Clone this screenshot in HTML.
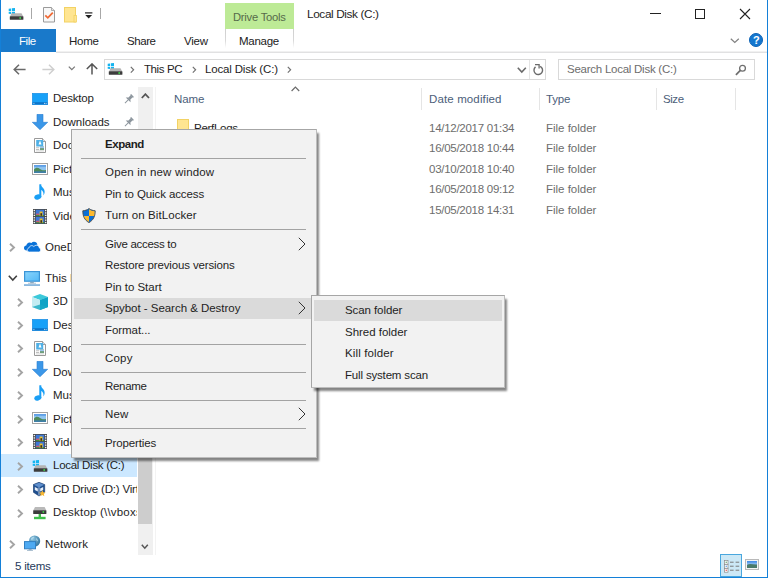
<!DOCTYPE html>
<html>
<head>
<meta charset="utf-8">
<title>Local Disk (C:)</title>
<style>
*{box-sizing:border-box;margin:0;padding:0}
html,body{width:768px;height:578px;overflow:hidden;background:#fff}
body{font-family:"Liberation Sans",sans-serif;font-size:11.5px;color:#1e1e1e;position:relative}
.a{position:absolute}
.t{position:absolute;white-space:nowrap;line-height:14px;height:14px;transform-origin:0 50%}
#win{position:absolute;left:0;top:0;width:768px;height:578px;border-left:1px solid #1480d8;border-right:1px solid #1480d8;border-bottom:1px solid #1480d8;background:#fff}
.sep{position:absolute;height:1px;background:#a3a3a3;left:81px;width:225px}
.mi{position:absolute;left:105px}
</style>
</head>
<body>
<div id="win"></div>

<!-- title bar -->
<div class="a" style="left:225px;top:3px;width:69px;height:26px;background:#bdea96"></div>
<div class="t" style="left:233px;top:10px;color:#566a4a;font-size:11.2px;letter-spacing:-0.23px">Drive Tools</div>
<div class="t" style="left:307px;top:7px;font-size:11.8px;letter-spacing:-0.38px">Local Disk (C:)</div>

<!-- ribbon tabs -->
<div class="a" style="left:1px;top:29px;width:55px;height:23px;background:#1979ca"></div>
<div class="t" style="left:19px;top:34px;color:#fff;letter-spacing:-0.45px">File</div>
<div class="t" style="left:69px;top:34px;color:#222;letter-spacing:-0.23px">Home</div>
<div class="t" style="left:127px;top:34px;color:#222;letter-spacing:-0.42px">Share</div>
<div class="t" style="left:184px;top:34px;color:#222;letter-spacing:-0.24px">View</div>
<div class="a" style="left:225px;top:29px;width:1px;height:19px;background:linear-gradient(#cfcfcf,#d8d8d8 60%,#fff)"></div><div class="a" style="left:293px;top:29px;width:1px;height:19px;background:linear-gradient(#cfcfcf,#d8d8d8 60%,#fff)"></div>
<div class="t" style="left:239px;top:34px;color:#222;letter-spacing:-0.27px">Manage</div>
<div class="a" style="left:56px;top:51px;width:711px;height:2px;background:linear-gradient(#f1f1f1 50%,#e1e1e2 50%)"></div>

<!-- address bar -->
<div class="a" style="left:104px;top:59px;width:442px;height:21px;border:1px solid #d9d9d9"></div>
<div class="a" style="left:529px;top:60px;width:1px;height:19px;background:#e5e5e5"></div>
<div class="t" style="left:144px;top:62px;letter-spacing:-0.4px">This PC</div>
<div class="t" style="left:205px;top:62px;letter-spacing:-0.17px">Local Disk (C:)</div>
<div class="a" style="left:558px;top:59px;width:197px;height:21px;border:1px solid #d9d9d9"></div>
<div class="t" style="left:567px;top:62px;color:#6d6d6d;letter-spacing:-0.25px">Search Local Disk (C:)</div>

<!-- nav pane -->
<div class="a" style="left:1px;top:454px;width:136px;height:23px;background:#cce8ff"></div>
<div class="a" style="left:138px;top:87px;width:15px;height:468px;background:#f0f0f0"></div>
<div class="a" style="left:138px;top:300px;width:14px;height:224px;background:#cdcdcd"></div>
<div class="a" style="left:0;top:84px;width:137px;height:471px;overflow:hidden"><div class="a" style="left:0;top:-84px">
<div class="t" style="left:53px;top:91px;letter-spacing:-0.21px">Desktop</div>
<div class="t" style="left:53px;top:115px;letter-spacing:-0.05px">Downloads</div>
<div class="t" style="left:53px;top:138px">Documents</div>
<div class="t" style="left:53px;top:162px">Pictures</div>
<div class="t" style="left:53px;top:185px">Music</div>
<div class="t" style="left:53px;top:209px">Videos</div>
<div class="t" style="left:45px;top:240px">OneDrive</div>
<div class="t" style="left:45px;top:271px">This PC</div>
<div class="t" style="left:53px;top:294px">3D Objects</div>
<div class="t" style="left:53px;top:318px">Desktop</div>
<div class="t" style="left:53px;top:341px">Documents</div>
<div class="t" style="left:53px;top:365px">Downloads</div>
<div class="t" style="left:53px;top:388px">Music</div>
<div class="t" style="left:53px;top:412px">Pictures</div>
<div class="t" style="left:53px;top:435px">Videos</div>
<div class="t" style="left:53px;top:458px;letter-spacing:-0.27px">Local Disk (C:)</div>
<div class="t" style="left:53px;top:482px;letter-spacing:-0.2px">CD Drive (D:) VirtualBox Guest</div>
<div class="t" style="left:53px;top:505px;letter-spacing:0.2px">Desktop (\\vboxsvr) (E:)</div>
<div class="t" style="left:45px;top:537px;letter-spacing:0.14px">Network</div>
</div></div>

<div class="a" style="left:155px;top:87px;width:1px;height:468px;background:#f3f3f3"></div>
<!-- column headers -->
<div class="t" style="left:174px;top:92px;color:#4c607a;letter-spacing:-0.11px">Name</div>
<div class="t" style="left:429px;top:92px;color:#4c607a;letter-spacing:0.13px">Date modified</div>
<div class="t" style="left:546px;top:92px;color:#4c607a;letter-spacing:-0.21px">Type</div>
<div class="t" style="left:663px;top:92px;color:#4c607a;letter-spacing:-0.45px">Size</div>
<div class="a" style="left:421px;top:88px;width:1px;height:22px;background:#e5e5e5"></div>
<div class="a" style="left:539px;top:88px;width:1px;height:22px;background:#e5e5e5"></div>
<div class="a" style="left:656px;top:88px;width:1px;height:22px;background:#e5e5e5"></div>
<div class="a" style="left:735px;top:88px;width:1px;height:22px;background:#e5e5e5"></div>

<!-- rows -->
<div class="t" style="left:194px;top:121px;letter-spacing:-0.28px">PerfLogs</div>
<div class="t" style="left:429px;top:121px;color:#6d6d6d;letter-spacing:-0.27px">14/12/2017 01:34</div>
<div class="t" style="left:429px;top:141px;color:#6d6d6d;letter-spacing:-0.27px">16/05/2018 10:44</div>
<div class="t" style="left:429px;top:162px;color:#6d6d6d;letter-spacing:-0.27px">03/10/2018 10:40</div>
<div class="t" style="left:429px;top:182px;color:#6d6d6d;letter-spacing:-0.27px">16/05/2018 09:12</div>
<div class="t" style="left:429px;top:203px;color:#6d6d6d;letter-spacing:-0.27px">15/05/2018 14:31</div>
<div class="t" style="left:546px;top:121px;color:#6d6d6d;letter-spacing:-0.01px">File folder</div>
<div class="t" style="left:546px;top:141px;color:#6d6d6d;letter-spacing:-0.01px">File folder</div>
<div class="t" style="left:546px;top:162px;color:#6d6d6d;letter-spacing:-0.01px">File folder</div>
<div class="t" style="left:546px;top:182px;color:#6d6d6d;letter-spacing:-0.01px">File folder</div>
<div class="t" style="left:546px;top:203px;color:#6d6d6d;letter-spacing:-0.01px">File folder</div>

<!-- status bar -->
<div class="t" style="left:15px;top:559px;color:#1e395b;letter-spacing:-0.2px">5 items</div>
<div class="a" style="left:720px;top:554px;width:22px;height:23px;background:#cce8f6;border:1px solid #49a7de"></div>

<!-- icons -->
<svg class="a" style="left:8px;top:8px" width="16" height="12" viewBox="0 0 16 12"><path d="M0.7 0.7L3 0.4V3H0.7z" fill="#14b4f0"/><path d="M3.8 0.3L7 0V3H3.8z" fill="#14b4f0"/><path d="M0.7 3.7H3V6.1L0.7 5.8z" fill="#14b4f0"/><path d="M3.8 3.7H7V6.4L3.8 6.1z" fill="#14b4f0"/><path d="M3.5 5.2h10l1.8 3.2h-13.3z" fill="#b4b4b4"/><rect x="1.8" y="8.2" width="13.6" height="3.6" rx="0.6" fill="#3c3c3c"/><rect x="11.4" y="9.2" width="1.6" height="1.6" fill="#3fe04a"/></svg>
<div class="a" style="left:31px;top:8px;width:1px;height:11px;background:#a8a8a8"></div>
<svg class="a" style="left:43px;top:7px" width="12" height="16" viewBox="0 0 12 16"><path d="M0.5 0.5h8l3 3v11.5h-11z" fill="#f8f8f8" stroke="#9a9a9a"/><path d="M8.5 0.5v3h3" fill="#e4e4e4" stroke="#9a9a9a" stroke-width="0.8"/><path d="M2.3 8.4L4.8 10.8L9.8 5.6" fill="none" stroke="#f06a35" stroke-width="1.8"/></svg>
<svg class="a" style="left:64px;top:7px" width="13" height="16" viewBox="0 0 13 16"><rect x="0.5" y="0.5" width="11" height="14.5" fill="#ffe591" stroke="#f2d264"/><rect x="10" y="8.5" width="2.5" height="6.5" fill="#ffe591" stroke="#f2d264" stroke-width="0.8"/></svg>
<svg class="a" style="left:85px;top:12px" width="8" height="7" viewBox="0 0 8 7"><rect x="0" y="0.3" width="7.4" height="1.2" fill="#222"/><path d="M0.3 3h6.8L3.7 6.6z" fill="#222"/></svg>
<div class="a" style="left:100px;top:8px;width:1px;height:11px;background:#a8a8a8"></div>
<div class="a" style="left:650px;top:13px;width:11px;height:1px;background:#222"></div>
<div class="a" style="left:695px;top:9px;width:10px;height:10px;border:1px solid #222"></div>
<svg class="a" style="left:739px;top:8px" width="12" height="12" viewBox="0 0 12 12"><path d="M1 1L11 11M11 1L1 11" stroke="#222" stroke-width="1.1"/></svg>
<svg class="a" style="left:730px;top:37.5px" width="10" height="6" viewBox="0 0 10 6"><path d="M0.8 0.8L4.8 4.4L8.8 0.8" fill="none" stroke="#828282" stroke-width="1.25"/></svg>
<div class="a" style="left:749px;top:33px;width:14px;height:14px;border-radius:7px;background:#1577cf;border:1px solid #0e63b6"></div><div class="t" style="left:753px;top:33px;color:#fff;font-weight:bold;font-size:11px">?</div>
<svg class="a" style="left:13px;top:64px" width="13" height="11" viewBox="0 0 13 11"><path d="M6 0.8L1.2 5.5L6 10.2M1.4 5.5H12.6" fill="none" stroke="#6a6a6a" stroke-width="1.5"/></svg>
<svg class="a" style="left:42px;top:64px" width="13" height="11" viewBox="0 0 13 11"><path d="M7 0.8L11.8 5.5L7 10.2M11.6 5.5H0.4" fill="none" stroke="#cfcfcf" stroke-width="1.5"/></svg>
<svg class="a" style="left:68px;top:66px" width="8" height="5" viewBox="0 0 8 5"><path d="M0.8 0.6L3.8 3.6L6.8 0.6" fill="none" stroke="#7a7a7a" stroke-width="1.3"/></svg>
<svg class="a" style="left:86px;top:63px" width="12" height="12" viewBox="0 0 12 12"><path d="M0.8 6L6 0.9L11.2 6M6 1.2V11.6" fill="none" stroke="#555" stroke-width="1.5"/></svg>
<svg class="a" style="left:107px;top:63px" width="16" height="12" viewBox="0 0 16 12"><path d="M0.7 0.7L3 0.4V3H0.7z" fill="#14b4f0"/><path d="M3.8 0.3L7 0V3H3.8z" fill="#14b4f0"/><path d="M0.7 3.7H3V6.1L0.7 5.8z" fill="#14b4f0"/><path d="M3.8 3.7H7V6.4L3.8 6.1z" fill="#14b4f0"/><path d="M3.5 5.2h10l1.8 3.2h-13.3z" fill="#b4b4b4"/><rect x="1.8" y="8.2" width="13.6" height="3.6" rx="0.6" fill="#3c3c3c"/><rect x="11.4" y="9.2" width="1.6" height="1.6" fill="#3fe04a"/></svg>
<svg class="a" style="left:130px;top:66px" width="5" height="8" viewBox="0 0 5 8"><path d="M0.8 0.9L3.6 3.8L0.8 6.7" fill="none" stroke="#707070" stroke-width="1.2"/></svg>
<svg class="a" style="left:192px;top:66px" width="5" height="8" viewBox="0 0 5 8"><path d="M0.8 0.9L3.6 3.8L0.8 6.7" fill="none" stroke="#707070" stroke-width="1.2"/></svg>
<svg class="a" style="left:287px;top:66px" width="5" height="8" viewBox="0 0 5 8"><path d="M0.8 0.9L3.6 3.8L0.8 6.7" fill="none" stroke="#707070" stroke-width="1.2"/></svg>
<svg class="a" style="left:517px;top:67px" width="10" height="7" viewBox="0 0 10 7"><path d="M0.8 0.8L4.8 5L8.8 0.8" fill="none" stroke="#6a6a6a" stroke-width="1.6"/></svg>
<svg class="a" style="left:533px;top:63px" width="12" height="13" viewBox="0 0 12 13"><path d="M7.1 3.3A4.3 4.3 0 1 1 2.5 3.9" fill="none" stroke="#6a6a6a" stroke-width="1.4"/><path d="M2 1.7H6.1V5.4" fill="none" stroke="#6a6a6a" stroke-width="1.3"/></svg>
<svg class="a" style="left:735px;top:63px" width="12" height="13" viewBox="0 0 12 13"><circle cx="7.5" cy="5.25" r="2.9" fill="none" stroke="#6e6e6e" stroke-width="1.3"/><path d="M5.6 7.2L0.9 11.8" stroke="#6e6e6e" stroke-width="1.7"/></svg>
<svg class="a" style="left:32px;top:93px" width="16" height="12" viewBox="0 0 16 12"><defs><linearGradient id="dg" x1="0" y1="0" x2="1" y2="1"><stop offset="0" stop-color="#1f9cf3"/><stop offset="0.5" stop-color="#1aa7fb"/><stop offset="1" stop-color="#1b98f2"/></linearGradient></defs><rect x="0.3" y="0.3" width="15.4" height="11.4" fill="#18a1f8" stroke="#1787df" stroke-width="0.6"/><rect x="0.6" y="9.2" width="14.8" height="2.2" fill="#0d74c9"/><rect x="1.4" y="9.9" width="1" height="0.9" fill="#d6ecfb"/><rect x="12" y="9.9" width="1" height="0.9" fill="#d6ecfb"/><rect x="13.6" y="9.9" width="1" height="0.9" fill="#d6ecfb"/></svg>
<svg class="a" style="left:32px;top:114px" width="16" height="16" viewBox="0 0 16 16"><path d="M5 0.3h6v8h4.7L8 15.7L0.3 8.3H5z" fill="#3b97e8" stroke="#2b80d2" stroke-width="0.6"/></svg>
<svg class="a" style="left:34px;top:138px" width="12" height="15" viewBox="0 0 12 15"><path d="M0.5 0.5h8l3 3v11h-11z" fill="#fff" stroke="#9a9a9a" stroke-width="1"/><path d="M8.5 0.5v3h3" fill="#e8e8e8" stroke="#8c8c8c" stroke-width="0.8"/><rect x="2.2" y="2" width="7" height="6.5" fill="#4fb0e6"/><path d="M4.5 6.5L6 2.5L7.5 6.5z" fill="#fff"/><rect x="6" y="8.5" width="4" height="3.6" fill="#6f9f7c"/><rect x="6" y="8.5" width="4" height="1.6" fill="#9cc6ee"/><rect x="2" y="9.4" width="3.2" height="0.8" fill="#b0b0b0"/><rect x="2" y="11" width="3.2" height="0.8" fill="#b0b0b0"/><rect x="2" y="12.6" width="8" height="0.7" fill="#c4c4c4"/></svg>
<svg class="a" style="left:32px;top:163px" width="16" height="12" viewBox="0 0 16 12"><rect x="0.5" y="0.5" width="15" height="11" fill="#fff" stroke="#a2a2a2" stroke-width="1"/><rect x="2" y="2" width="12" height="8" fill="#8fc4f0"/><path d="M2 6.5C4 4 6 4.5 8 6S12 7.5 14 7V10H2z" fill="#4f8a5a"/><path d="M2 8.6C6 8 10 8.6 14 8.2V10H2z" fill="#3f7fa8"/><rect x="2" y="2" width="12" height="1.8" fill="#5f9fe6"/></svg>
<svg class="a" style="left:34px;top:184px" width="12" height="16" viewBox="0 0 12 16"><ellipse cx="3.8" cy="13" rx="3.6" ry="2.6" fill="#1a9ff5" transform="rotate(-15 3.8 13)"/><rect x="5.3" y="0.3" width="2" height="13" fill="#1a9ff5"/><path d="M6.3 0.3C7 3 11.2 4.5 10.6 8.5C10.4 9.8 9.8 10.8 9.2 11.4C10 9 9.2 6.8 6.3 5.6z" fill="#1a9ff5"/></svg>
<svg class="a" style="left:33px;top:209px" width="14" height="15" viewBox="0 0 14 15"><rect x="0" y="0" width="14" height="15" fill="#4a4a4a"/><rect x="2.7" y="0.8" width="8.6" height="6.3" fill="#3d78d8"/><rect x="2.7" y="7.9" width="8.6" height="6.3" fill="#3d78d8"/><rect x="2.7" y="6" width="8.6" height="1.1" fill="#3a8a3a"/><rect x="2.7" y="13.1" width="8.6" height="1.1" fill="#3a8a3a"/><rect x="3.2" y="4.6" width="3" height="1.5" fill="#d05a6a"/><rect x="3.2" y="11.7" width="3" height="1.5" fill="#d05a6a"/><rect x="6.6" y="2.5" width="3" height="4.4" fill="#e8c030"/><rect x="6.6" y="9.5" width="3" height="4.4" fill="#e8c030"/><rect x="7.4" y="4.2" width="1.6" height="2.6" fill="#3a3020"/><rect x="7.4" y="11.2" width="1.6" height="2.6" fill="#3a3020"/><rect x="0.6" y="0.9" width="1.4" height="1.3" fill="#f4f4f4"/><rect x="12" y="0.9" width="1.4" height="1.3" fill="#f4f4f4"/><rect x="0.6" y="3.3" width="1.4" height="1.3" fill="#f4f4f4"/><rect x="12" y="3.3" width="1.4" height="1.3" fill="#f4f4f4"/><rect x="0.6" y="5.7" width="1.4" height="1.3" fill="#f4f4f4"/><rect x="12" y="5.7" width="1.4" height="1.3" fill="#f4f4f4"/><rect x="0.6" y="8.1" width="1.4" height="1.3" fill="#f4f4f4"/><rect x="12" y="8.1" width="1.4" height="1.3" fill="#f4f4f4"/><rect x="0.6" y="10.5" width="1.4" height="1.3" fill="#f4f4f4"/><rect x="12" y="10.5" width="1.4" height="1.3" fill="#f4f4f4"/><rect x="0.6" y="12.9" width="1.4" height="1.3" fill="#f4f4f4"/><rect x="12" y="12.9" width="1.4" height="1.3" fill="#f4f4f4"/></svg>
<svg class="a" style="left:124px;top:94px" width="10" height="10" viewBox="0 0 10 10"><g transform="rotate(45 5 5)" fill="#8b949c"><rect x="3" y="0" width="4" height="1.4"/><rect x="3.6" y="1.2" width="2.8" height="3.6"/><path d="M1.6 6.2L3.4 4.6h3.2L8.4 6.2z"/><rect x="4.6" y="6.2" width="0.9" height="4.6"/></g></svg>
<svg class="a" style="left:124px;top:117px" width="10" height="10" viewBox="0 0 10 10"><g transform="rotate(45 5 5)" fill="#8b949c"><rect x="3" y="0" width="4" height="1.4"/><rect x="3.6" y="1.2" width="2.8" height="3.6"/><path d="M1.6 6.2L3.4 4.6h3.2L8.4 6.2z"/><rect x="4.6" y="6.2" width="0.9" height="4.6"/></g></svg>
<svg class="a" style="left:9px;top:243px" width="7" height="9" viewBox="0 0 7 9"><path d="M1 0.8L5 4.5L1 8.2" fill="none" stroke="#a4a4a4" stroke-width="1.9"/></svg>
<svg class="a" style="left:24px;top:241px" width="17" height="12" viewBox="0 0 17 12"><path d="M2.6 9.4C1 9.4 0 8.3 0 7C0 5.7 0.9 4.7 2.3 4.6C2.4 2.7 3.9 1.4 5.6 1.4C6.3 1.4 6.9 1.6 7.4 2C8.1 1.2 9 0.8 10 0.8C11.8 0.8 13.2 2.1 13.4 3.8L5 9.4z" fill="#0a72d8"/><path d="M5.4 11C4 11 3.2 10 3.2 9C3.2 8 3.9 7.1 5 7C5.2 5.6 6.4 4.6 7.8 4.6C8.6 4.6 9.4 5 9.9 5.6C10.4 4.8 11.3 4.2 12.4 4.2C14 4.2 15.2 5.4 15.3 6.9C16.1 7.2 16.6 8 16.6 8.9C16.6 10.1 15.7 11 14.5 11z" fill="#0a72d8" stroke="#fff" stroke-width="0.7"/></svg>
<svg class="a" style="left:7.5px;top:274.8px" width="10" height="7" viewBox="0 0 10 7"><path d="M0.8 0.8L4.8 5L8.8 0.8" fill="none" stroke="#404040" stroke-width="1.6"/></svg>
<svg class="a" style="left:24px;top:271px" width="16" height="15" viewBox="0 0 16 15"><defs><linearGradient id="pg" x1="0" y1="0" x2="1" y2="1"><stop offset="0" stop-color="#8ad4fc"/><stop offset="1" stop-color="#52b8f6"/></linearGradient></defs><rect x="0.6" y="0.6" width="14.8" height="9.6" fill="url(#pg)" stroke="#3a94d6" stroke-width="1.2"/><rect x="6.2" y="10.8" width="3.6" height="1.4" fill="#8aa8c0"/><rect x="4" y="11.8" width="8" height="0.8" fill="#9db4c8"/><rect x="0" y="13.4" width="16" height="1.3" fill="#5b9bd0"/></svg>
<svg class="a" style="left:17px;top:298px" width="7" height="9" viewBox="0 0 7 9"><path d="M1 0.8L5 4.5L1 8.2" fill="none" stroke="#a4a4a4" stroke-width="1.9"/></svg>
<svg class="a" style="left:17px;top:321px" width="7" height="9" viewBox="0 0 7 9"><path d="M1 0.8L5 4.5L1 8.2" fill="none" stroke="#a4a4a4" stroke-width="1.9"/></svg>
<svg class="a" style="left:17px;top:344px" width="7" height="9" viewBox="0 0 7 9"><path d="M1 0.8L5 4.5L1 8.2" fill="none" stroke="#a4a4a4" stroke-width="1.9"/></svg>
<svg class="a" style="left:17px;top:368px" width="7" height="9" viewBox="0 0 7 9"><path d="M1 0.8L5 4.5L1 8.2" fill="none" stroke="#a4a4a4" stroke-width="1.9"/></svg>
<svg class="a" style="left:17px;top:391px" width="7" height="9" viewBox="0 0 7 9"><path d="M1 0.8L5 4.5L1 8.2" fill="none" stroke="#a4a4a4" stroke-width="1.9"/></svg>
<svg class="a" style="left:17px;top:415px" width="7" height="9" viewBox="0 0 7 9"><path d="M1 0.8L5 4.5L1 8.2" fill="none" stroke="#a4a4a4" stroke-width="1.9"/></svg>
<svg class="a" style="left:17px;top:438px" width="7" height="9" viewBox="0 0 7 9"><path d="M1 0.8L5 4.5L1 8.2" fill="none" stroke="#a4a4a4" stroke-width="1.9"/></svg>
<svg class="a" style="left:17px;top:462px" width="7" height="9" viewBox="0 0 7 9"><path d="M1 0.8L5 4.5L1 8.2" fill="none" stroke="#a4a4a4" stroke-width="1.9"/></svg>
<svg class="a" style="left:17px;top:485px" width="7" height="9" viewBox="0 0 7 9"><path d="M1 0.8L5 4.5L1 8.2" fill="none" stroke="#a4a4a4" stroke-width="1.9"/></svg>
<svg class="a" style="left:17px;top:509px" width="7" height="9" viewBox="0 0 7 9"><path d="M1 0.8L5 4.5L1 8.2" fill="none" stroke="#a4a4a4" stroke-width="1.9"/></svg>
<svg class="a" style="left:32px;top:294px" width="16" height="16" viewBox="0 0 16 16"><path d="M8 0L16 3L8 6L0 3z" fill="#3cc9da"/><path d="M0 3L8 6V16L0 13z" fill="#c3ecf2"/><path d="M16 3L8 6V16L16 13z" fill="#0fa4c6"/><path d="M0 13L8 10.6L16 13L8 16z" fill="#23aec4" opacity="0.85"/><path d="M8 6V16L16 13V3z" fill="#0fa4c6" opacity="0.6"/></svg>
<svg class="a" style="left:32px;top:319px" width="16" height="12" viewBox="0 0 16 12"><defs><linearGradient id="dg" x1="0" y1="0" x2="1" y2="1"><stop offset="0" stop-color="#1f9cf3"/><stop offset="0.5" stop-color="#1aa7fb"/><stop offset="1" stop-color="#1b98f2"/></linearGradient></defs><rect x="0.3" y="0.3" width="15.4" height="11.4" fill="#18a1f8" stroke="#1787df" stroke-width="0.6"/><rect x="0.6" y="9.2" width="14.8" height="2.2" fill="#0d74c9"/><rect x="1.4" y="9.9" width="1" height="0.9" fill="#d6ecfb"/><rect x="12" y="9.9" width="1" height="0.9" fill="#d6ecfb"/><rect x="13.6" y="9.9" width="1" height="0.9" fill="#d6ecfb"/></svg>
<svg class="a" style="left:34px;top:341px" width="12" height="15" viewBox="0 0 12 15"><path d="M0.5 0.5h8l3 3v11h-11z" fill="#fff" stroke="#9a9a9a" stroke-width="1"/><path d="M8.5 0.5v3h3" fill="#e8e8e8" stroke="#8c8c8c" stroke-width="0.8"/><rect x="2.2" y="2" width="7" height="6.5" fill="#4fb0e6"/><path d="M4.5 6.5L6 2.5L7.5 6.5z" fill="#fff"/><rect x="6" y="8.5" width="4" height="3.6" fill="#6f9f7c"/><rect x="6" y="8.5" width="4" height="1.6" fill="#9cc6ee"/><rect x="2" y="9.4" width="3.2" height="0.8" fill="#b0b0b0"/><rect x="2" y="11" width="3.2" height="0.8" fill="#b0b0b0"/><rect x="2" y="12.6" width="8" height="0.7" fill="#c4c4c4"/></svg>
<svg class="a" style="left:32px;top:361px" width="16" height="16" viewBox="0 0 16 16"><path d="M5 0.3h6v8h4.7L8 15.7L0.3 8.3H5z" fill="#3b97e8" stroke="#2b80d2" stroke-width="0.6"/></svg>
<svg class="a" style="left:34px;top:385px" width="12" height="16" viewBox="0 0 12 16"><ellipse cx="3.8" cy="13" rx="3.6" ry="2.6" fill="#1a9ff5" transform="rotate(-15 3.8 13)"/><rect x="5.3" y="0.3" width="2" height="13" fill="#1a9ff5"/><path d="M6.3 0.3C7 3 11.2 4.5 10.6 8.5C10.4 9.8 9.8 10.8 9.2 11.4C10 9 9.2 6.8 6.3 5.6z" fill="#1a9ff5"/></svg>
<svg class="a" style="left:32px;top:412px" width="16" height="12" viewBox="0 0 16 12"><rect x="0.5" y="0.5" width="15" height="11" fill="#fff" stroke="#a2a2a2" stroke-width="1"/><rect x="2" y="2" width="12" height="8" fill="#8fc4f0"/><path d="M2 6.5C4 4 6 4.5 8 6S12 7.5 14 7V10H2z" fill="#4f8a5a"/><path d="M2 8.6C6 8 10 8.6 14 8.2V10H2z" fill="#3f7fa8"/><rect x="2" y="2" width="12" height="1.8" fill="#5f9fe6"/></svg>
<svg class="a" style="left:33px;top:434px" width="14" height="15" viewBox="0 0 14 15"><rect x="0" y="0" width="14" height="15" fill="#4a4a4a"/><rect x="2.7" y="0.8" width="8.6" height="6.3" fill="#3d78d8"/><rect x="2.7" y="7.9" width="8.6" height="6.3" fill="#3d78d8"/><rect x="2.7" y="6" width="8.6" height="1.1" fill="#3a8a3a"/><rect x="2.7" y="13.1" width="8.6" height="1.1" fill="#3a8a3a"/><rect x="3.2" y="4.6" width="3" height="1.5" fill="#d05a6a"/><rect x="3.2" y="11.7" width="3" height="1.5" fill="#d05a6a"/><rect x="6.6" y="2.5" width="3" height="4.4" fill="#e8c030"/><rect x="6.6" y="9.5" width="3" height="4.4" fill="#e8c030"/><rect x="7.4" y="4.2" width="1.6" height="2.6" fill="#3a3020"/><rect x="7.4" y="11.2" width="1.6" height="2.6" fill="#3a3020"/><rect x="0.6" y="0.9" width="1.4" height="1.3" fill="#f4f4f4"/><rect x="12" y="0.9" width="1.4" height="1.3" fill="#f4f4f4"/><rect x="0.6" y="3.3" width="1.4" height="1.3" fill="#f4f4f4"/><rect x="12" y="3.3" width="1.4" height="1.3" fill="#f4f4f4"/><rect x="0.6" y="5.7" width="1.4" height="1.3" fill="#f4f4f4"/><rect x="12" y="5.7" width="1.4" height="1.3" fill="#f4f4f4"/><rect x="0.6" y="8.1" width="1.4" height="1.3" fill="#f4f4f4"/><rect x="12" y="8.1" width="1.4" height="1.3" fill="#f4f4f4"/><rect x="0.6" y="10.5" width="1.4" height="1.3" fill="#f4f4f4"/><rect x="12" y="10.5" width="1.4" height="1.3" fill="#f4f4f4"/><rect x="0.6" y="12.9" width="1.4" height="1.3" fill="#f4f4f4"/><rect x="12" y="12.9" width="1.4" height="1.3" fill="#f4f4f4"/></svg>
<svg class="a" style="left:32px;top:460px" width="16" height="12" viewBox="0 0 16 12"><path d="M0.7 0.7L3 0.4V3H0.7z" fill="#14b4f0"/><path d="M3.8 0.3L7 0V3H3.8z" fill="#14b4f0"/><path d="M0.7 3.7H3V6.1L0.7 5.8z" fill="#14b4f0"/><path d="M3.8 3.7H7V6.4L3.8 6.1z" fill="#14b4f0"/><path d="M3.5 5.2h10l1.8 3.2h-13.3z" fill="#b4b4b4"/><rect x="1.8" y="8.2" width="13.6" height="3.6" rx="0.6" fill="#3c3c3c"/><rect x="11.4" y="9.2" width="1.6" height="1.6" fill="#3fe04a"/></svg>
<svg class="a" style="left:33px;top:482px" width="13" height="15" viewBox="0 0 13 15"><path d="M6 0.3L11.7 2.6V10.2L6 14L0.3 10.2V2.6z" fill="#1f4f8f" stroke="#16386a" stroke-width="0.6"/><path d="M6 0.8L11.2 2.8L6 5.4L0.8 2.8z" fill="#5f8fcc"/><path d="M6 5.4V13.4" stroke="#dfe9f5" stroke-width="0.8"/><path d="M1.8 5L4.8 6.6V9.6L1.8 8z" fill="#e8eff8"/><path d="M10.2 5L7.2 6.6V9.6L10.2 8z" fill="#e8eff8"/><path d="M9.3 8.2l1 2 2.2 .3-1.6 1.5 .4 2.2-2-1.1-2 1.1 .4-2.2-1.6-1.5 2.2-.3z" fill="#f7b733"/></svg>
<svg class="a" style="left:33px;top:507px" width="14" height="13" viewBox="0 0 14 13"><path d="M2 0h9.6l1.8 3.4H0.2z" fill="#b9b9b9"/><rect x="0.2" y="3.2" width="13.2" height="3.8" rx="0.5" fill="#3c3c3c"/><rect x="9.6" y="4.2" width="1.5" height="1.6" fill="#3fe04a"/><rect x="5.6" y="7" width="2.4" height="3" fill="#3fbf4a"/><rect x="1" y="9.8" width="11.6" height="2.4" fill="#3fbf4a"/></svg>
<svg class="a" style="left:9px;top:540px" width="7" height="9" viewBox="0 0 7 9"><path d="M1 0.8L5 4.5L1 8.2" fill="none" stroke="#a4a4a4" stroke-width="1.9"/></svg>
<svg class="a" style="left:24px;top:535px" width="17" height="17" viewBox="0 0 17 17"><defs><radialGradient id="gg" cx="0.35" cy="0.3" r="0.8"><stop offset="0" stop-color="#8cc4e0"/><stop offset="1" stop-color="#2d6f98"/></radialGradient></defs><circle cx="10.6" cy="6" r="5.6" fill="url(#gg)"/><path d="M7 3.5C8 2 9.5 1.5 10.5 2C10 3 9 3.5 8.5 4.5C8 5.5 7 5 7 3.5z" fill="#b5dcef" opacity="0.8"/><path d="M12 3C13 3.5 14 4.5 14 6C13 6.5 12.5 5.5 12 4.5z" fill="#b5dcef" opacity="0.7"/><rect x="0.5" y="6.6" width="11" height="7.2" fill="#4eaaf2" stroke="#3280c2" stroke-width="1"/><rect x="4.6" y="14.2" width="3" height="1" fill="#7f9fb8"/><rect x="3" y="15.2" width="6" height="0.8" fill="#9db4c8"/></svg>
<svg class="a" style="left:141px;top:93px" width="9" height="6" viewBox="0 0 9 6"><path d="M0.8 5L4.4 1.2L8 5" fill="none" stroke="#555" stroke-width="1.8"/></svg>
<svg class="a" style="left:141px;top:544px" width="8" height="6" viewBox="0 0 8 6"><path d="M0.8 0.8L3.8 4.2L6.8 0.8" fill="none" stroke="#555" stroke-width="1.5"/></svg>
<svg class="a" style="left:291px;top:86px" width="9" height="6" viewBox="0 0 9 6"><path d="M0.6 5L4.4 1.2L8.2 5" fill="none" stroke="#6a6a6a" stroke-width="1.2"/></svg>
<svg class="a" style="left:177px;top:119px" width="12" height="12" viewBox="0 0 12 12"><rect x="0.5" y="0.5" width="11" height="12" fill="#ffe591" stroke="#f2d264"/></svg>
<svg class="a" style="left:724px;top:560px" width="16" height="13" viewBox="0 0 16 13"><rect x="0.4" y="0.4" width="3.6" height="3.8" fill="#fff" stroke="#8a8a8a" stroke-width="0.7"/><rect x="0.4" y="4.4" width="3.6" height="3.8" fill="#fff" stroke="#8a8a8a" stroke-width="0.7"/><rect x="0.4" y="8.4" width="3.6" height="3.8" fill="#fff" stroke="#8a8a8a" stroke-width="0.7"/><rect x="1.7" y="1.6" width="1" height="1.4" fill="#4a9a5a"/><rect x="1.7" y="5.6" width="1" height="1.4" fill="#3a8ae8"/><rect x="1.7" y="9.6" width="1" height="1.4" fill="#e03030"/><rect x="6" y="1.7" width="3.6" height="1" fill="#7a7a7a"/><rect x="11.6" y="1.7" width="3.6" height="1" fill="#7a7a7a"/><rect x="6" y="5.7" width="3.6" height="1" fill="#7a7a7a"/><rect x="11.6" y="5.7" width="3.6" height="1" fill="#7a7a7a"/><rect x="6" y="9.7" width="3.6" height="1" fill="#7a7a7a"/><rect x="11.6" y="9.7" width="3.6" height="1" fill="#7a7a7a"/></svg>
<svg class="a" style="left:745px;top:559px" width="14" height="11" viewBox="0 0 14 11"><rect x="0.5" y="0.5" width="13" height="10" fill="#f4f4f4" stroke="#b9b9b9"/><rect x="2" y="2" width="10" height="7" fill="#7fb4ee"/><path d="M2 6C5 4 8 6 12 5.5V9H2z" fill="#4a7a6a"/><rect x="2" y="2" width="10" height="1.6" fill="#4a90e8"/></svg>

<!-- context menu -->
<div class="a" style="left:71px;top:129px;width:245.5px;height:328.5px;background:#f2f2f2;border:1px solid #a6a6a6;border-right-color:#bdbdbd;border-bottom-color:#bdbdbd;box-shadow:2.5px 3px 2px -0.5px rgba(0,0,0,.48)"></div>
<div class="a" style="left:74px;top:298px;width:240px;height:21px;background:#dadada"></div>
<div class="t mi" style="top:137px;font-weight:bold;letter-spacing:-0.45px">Expand</div>
<div class="sep" style="top:158px"></div>
<div class="t mi" style="top:165px;letter-spacing:0.18px">Open in new window</div>
<div class="t mi" style="top:187px;letter-spacing:-0.1px">Pin to Quick access</div>
<div class="t mi" style="top:208px;letter-spacing:0.08px">Turn on BitLocker</div>
<div class="sep" style="top:229px"></div>
<div class="t mi" style="top:237px;letter-spacing:-0.29px">Give access to</div>
<div class="t mi" style="top:258px;letter-spacing:-0.13px">Restore previous versions</div>
<div class="t mi" style="top:280px;letter-spacing:-0.02px">Pin to Start</div>
<div class="t mi" style="top:301px;letter-spacing:-0.03px">Spybot - Search &amp; Destroy</div>
<div class="t mi" style="top:323px;letter-spacing:-0.07px">Format...</div>
<div class="sep" style="top:344px"></div>
<div class="t mi" style="top:351px;letter-spacing:0.21px">Copy</div>
<div class="sep" style="top:372px"></div>
<div class="t mi" style="top:379px;letter-spacing:-0.29px">Rename</div>
<div class="sep" style="top:400px"></div>
<div class="t mi" style="top:407px;letter-spacing:0.14px">New</div>
<div class="sep" style="top:428px"></div>
<div class="t mi" style="top:436px;letter-spacing:-0.12px">Properties</div>

<!-- menu icons -->
<svg class="a" style="left:82px;top:208px" width="14" height="15" viewBox="0 0 14 15"><path d="M7 0.6C8.8 2 11 2.6 13.2 2.8C13.2 8 11.6 12 7 14.6C2.4 12 0.8 8 0.8 2.8C3 2.6 5.2 2 7 0.6z" fill="#0a6fd6" stroke="#4a4a4a" stroke-width="0.9"/><path d="M7 1.2C8.7 2.4 10.6 3 12.7 3.2C12.7 5 12.5 6.6 12.1 8H7z" fill="#fdb92e"/><path d="M7 8V14C4.2 12.4 2.6 10.4 1.9 8z" fill="#fdb92e"/></svg>
<svg class="a" style="left:298px;top:237px" width="8" height="14" viewBox="0 0 8 14"><path d="M0.8 0.8L7 7L0.8 13.2" fill="none" stroke="#333" stroke-width="1"/></svg>
<svg class="a" style="left:298px;top:301px" width="8" height="14" viewBox="0 0 8 14"><path d="M0.8 0.8L7 7L0.8 13.2" fill="none" stroke="#333" stroke-width="1"/></svg>
<svg class="a" style="left:298px;top:407px" width="8" height="14" viewBox="0 0 8 14"><path d="M0.8 0.8L7 7L0.8 13.2" fill="none" stroke="#333" stroke-width="1"/></svg>

<!-- submenu -->
<div class="a" style="left:311px;top:295px;width:194px;height:93px;background:#f2f2f2;border:1px solid #a6a6a6;border-right-color:#bdbdbd;border-bottom-color:#bdbdbd;box-shadow:2.5px 3px 2px -0.5px rgba(0,0,0,.48)"></div>
<div class="a" style="left:314px;top:300px;width:188px;height:21px;background:#dadada"></div>
<div class="t" style="left:345px;top:303px;letter-spacing:-0.08px">Scan folder</div>
<div class="t" style="left:345px;top:325px;letter-spacing:-0.02px">Shred folder</div>
<div class="t" style="left:345px;top:346px;letter-spacing:0.14px">Kill folder</div>
<div class="t" style="left:345px;top:368px;letter-spacing:-0.17px">Full system scan</div>
</body>
</html>
